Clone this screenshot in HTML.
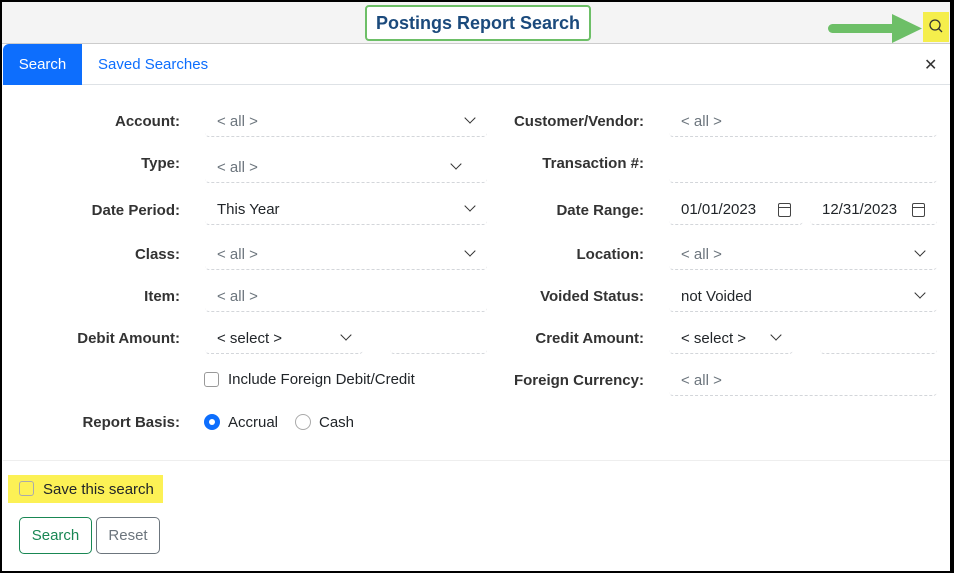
<!DOCTYPE html>
<html><head><meta charset="utf-8"><style>
*{box-sizing:border-box;margin:0;padding:0}
body{width:954px;height:573px;overflow:hidden;background:#000;font-family:"Liberation Sans",sans-serif;font-size:15px;color:#212529;position:relative}
#wrap{position:absolute;left:2px;top:2px;width:948px;height:569px;background:#fff;overflow:hidden}
#hdr{position:absolute;left:0;top:0;width:948px;height:42px;background:#f4f4f4;border-bottom:1px solid #ccc}
#title{position:absolute;left:363px;top:3px;width:226px;height:36px;border:2px solid #6dbf67;border-radius:4px;background:#fff;color:#1b4a7c;font-weight:bold;font-size:18px;text-align:center;line-height:32px}
#arrow{position:absolute;left:826px;top:12px}
#qbtn{position:absolute;left:921px;top:10px;width:26px;height:30px;background:#f5ee4c}
#panel{position:absolute;left:1px;top:42px;width:947px;height:530px;background:#fff;border-top-left-radius:6px}
#tabs{position:absolute;left:0;top:0;width:947px;height:41px;border-bottom:1px solid #dee2e6}
.tab1{position:absolute;left:0;top:0;width:79px;height:41px;background:#0d6efd;color:#fff;text-align:center;line-height:41px;border-top-left-radius:6px}
.tab2{position:absolute;left:95px;top:0;line-height:41px;color:#0d6efd}
.x{position:absolute;left:921px;top:11px;font-size:16px;color:#333}
.lbl{position:absolute;font-weight:bold;color:#333;text-align:right;white-space:nowrap}
.f{position:absolute;height:28px;border-bottom:1px dashed #d3d6da;border-radius:0 0 4px 4px;padding-left:12px;line-height:26px;white-space:nowrap}
.ph{color:#6c757d}
.chev{position:absolute;right:13px;top:5px;width:8px;height:8px;border-right:1.6px solid #333;border-bottom:1.6px solid #333;transform:rotate(45deg)}
.cal{position:absolute;right:12px;top:6px;width:13px;height:14px;border:1.5px solid #444;border-radius:2px}
.cal:before{content:"";position:absolute;left:0;right:0;top:3px;border-top:1.5px solid #444}
.cb{position:absolute;width:15px;height:15px;border:1px solid #999;border-radius:3px;background:#fff}
.btn{position:absolute;height:37px;border:1px solid;border-radius:5px;line-height:35px;text-align:center}
</style></head><body>
<div id="wrap">
<div id="hdr">
 <div id="title">Postings Report Search</div>
 <svg id="arrow" width="96" height="30" viewBox="0 0 96 30"><rect x="0" y="10" width="70" height="9" rx="4.5" fill="#6dbf67"/><polygon points="64,0 94,14.5 64,29" fill="#6dbf67"/></svg>
 <div id="qbtn"><svg width="26" height="30"><circle cx="12" cy="13" r="5" fill="none" stroke="#333" stroke-width="1.3"/><line x1="15.5" y1="16.5" x2="19" y2="20" stroke="#333" stroke-width="1.3"/></svg></div>
</div>
<div id="panel">
 <div id="tabs"><div class="tab1">Search</div><div class="tab2">Saved Searches</div><div class="x">✕</div></div>
</div>
</div>
<div class="lbl" style="right:774px;top:113px">Account:</div>
<div class="f" style="left:205px;top:109px;width:282px"><span class="ph">&lt; all &gt;</span><i class="chev"></i></div>
<div class="lbl" style="right:310px;top:113px">Customer/Vendor:</div>
<div class="f" style="left:669px;top:109px;width:268px"><span class="ph">&lt; all &gt;</span></div>

<div class="lbl" style="right:774px;top:155px">Type:</div>
<div class="f" style="left:205px;top:155px;width:282px"><span class="ph">&lt; all &gt;</span><i class="chev" style="right:27px"></i></div>
<div class="lbl" style="right:310px;top:155px">Transaction #:</div>
<div class="f" style="left:669px;top:155px;width:268px"></div>

<div class="lbl" style="right:774px;top:202px">Date Period:</div>
<div class="f" style="left:205px;top:197px;width:282px">This Year<i class="chev"></i></div>
<div class="lbl" style="right:310px;top:202px">Date Range:</div>
<div class="f" style="left:669px;top:197px;width:134px">01/01/2023<i class="cal"></i></div>
<div class="f" style="left:810px;top:197px;width:127px">12/31/2023<i class="cal"></i></div>

<div class="lbl" style="right:774px;top:246px">Class:</div>
<div class="f" style="left:205px;top:242px;width:282px"><span class="ph">&lt; all &gt;</span><i class="chev"></i></div>
<div class="lbl" style="right:310px;top:246px">Location:</div>
<div class="f" style="left:669px;top:242px;width:268px"><span class="ph">&lt; all &gt;</span><i class="chev"></i></div>

<div class="lbl" style="right:774px;top:288px">Item:</div>
<div class="f" style="left:205px;top:284px;width:282px"><span class="ph">&lt; all &gt;</span></div>
<div class="lbl" style="right:310px;top:288px">Voided Status:</div>
<div class="f" style="left:669px;top:284px;width:268px">not Voided<i class="chev"></i></div>

<div class="lbl" style="right:774px;top:330px">Debit Amount:</div>
<div class="f" style="left:205px;top:326px;width:158px">&lt; select &gt;<i class="chev"></i></div>
<div class="f" style="left:390px;top:326px;width:97px"></div>
<div class="lbl" style="right:310px;top:330px">Credit Amount:</div>
<div class="f" style="left:669px;top:326px;width:124px">&lt; select &gt;<i class="chev"></i></div>
<div class="f" style="left:820px;top:326px;width:117px"></div>

<div class="cb" style="left:204px;top:372px"></div>
<div style="position:absolute;left:228px;top:371px">Include Foreign Debit/Credit</div>
<div class="lbl" style="right:310px;top:372px">Foreign Currency:</div>
<div class="f" style="left:669px;top:368px;width:268px"><span class="ph">&lt; all &gt;</span></div>

<div class="lbl" style="right:774px;top:414px">Report Basis:</div>
<div style="position:absolute;left:204px;top:414px;width:16px;height:16px;border-radius:50%;background:#0d6efd"><div style="position:absolute;left:5px;top:5px;width:6px;height:6px;border-radius:50%;background:#fff"></div></div>
<div style="position:absolute;left:228px;top:414px">Accrual</div>
<div style="position:absolute;left:295px;top:414px;width:16px;height:16px;border-radius:50%;border:1px solid #aaa"></div>
<div style="position:absolute;left:319px;top:414px">Cash</div>

<div style="position:absolute;left:3px;top:460px;width:947px;border-top:1px solid #eee"></div>
<div style="position:absolute;left:8px;top:475px;width:155px;height:28px;background:#fcf155"></div>
<div class="cb" style="left:19px;top:481px;border-color:#aaa;background:transparent"></div>
<div style="position:absolute;left:43px;top:481px">Save this search</div>
<div class="btn" style="left:19px;top:517px;width:73px;border-color:#198754;color:#198754">Search</div>
<div class="btn" style="left:96px;top:517px;width:64px;border-color:#6c757d;color:#6c757d">Reset</div>
</body></html>
